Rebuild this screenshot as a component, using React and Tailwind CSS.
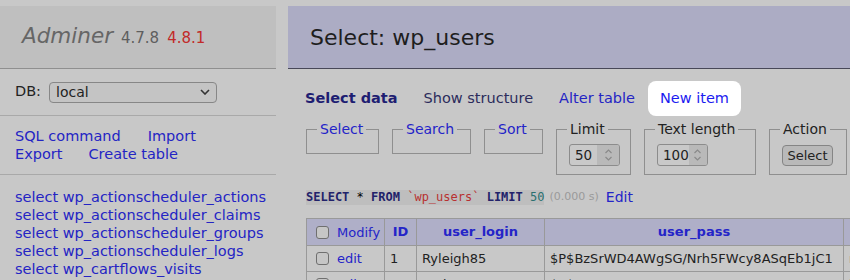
import React from 'react';

const sans = "font-['DejaVu_Sans',Verdana,sans-serif]";

const tables = [
  'wp_actionscheduler_actions',
  'wp_actionscheduler_claims',
  'wp_actionscheduler_groups',
  'wp_actionscheduler_logs',
  'wp_cartflows_visits',
];

function Box() {
  return <span className="inline-block w-[13px] h-[13px] border border-[#6f6f6f] rounded-[3px] bg-[#c6c6c6] align-middle" />;
}

function Spin({ value }) {
  return (
    <div className="flex w-[51px] h-[22px] border border-[#8c8c8c] rounded-[3px] bg-[#c9c9c9] overflow-hidden">
      <span className="flex-1 pl-[5px] text-[13.5px] leading-[20px] text-[#222]">{value}</span>
      <span className="w-[22px] bg-[#b9b9b9] flex flex-col items-center justify-center">
        <svg width="9" height="14" viewBox="0 0 9 14" fill="none" stroke="#8a8a8a" strokeWidth="1.2">
          <path d="M1.5 5 L4.5 2 L7.5 5" />
          <path d="M1.5 9 L4.5 12 L7.5 9" />
        </svg>
      </span>
    </div>
  );
}

function Field({ legend, blue, children, w }) {
  return (
    <fieldset className={`border border-[#8f8f8f] px-[10px] ${w}`}>
      <legend className={`px-[3px] text-[14px] leading-[18px] ${blue ? 'text-[#2424c8]' : 'text-[#222]'}`}>{legend}</legend>
      {children}
    </fieldset>
  );
}

export default function App() {
  return (
    <div className={`${sans} w-[850px] h-[280px] overflow-hidden bg-[#c8c8c8] pt-[6px] flex`}>
      {/* sidebar */}
      <div className="w-[276px] shrink-0">
        <div className="h-[63px] bg-[#bfbfbf] border-b border-[#8f8f8f] flex items-center pl-[22px] pb-[1px] gap-[8px]">
          <span className="italic text-[21.5px] text-[#666]">Adminer</span>
          <span className="text-[15px] text-[#5e5e5e] mt-[4px]">4.7.8</span>
          <span className="text-[15px] text-[#c22a2a] mt-[4px]">4.8.1</span>
        </div>
        <div className="h-[47px] border-b border-[#a9a9a9] flex items-center pl-[15px] gap-[8px]">
          <span className="text-[14.5px] text-[#222]">DB:</span>
          <div className="w-[168px] h-[21px] border border-[#878787] rounded-[4px] bg-[#c4c4c4] flex items-center justify-between px-[6px]">
            <span className="text-[14px] text-[#222]">local</span>
            <svg width="10" height="6" viewBox="0 0 10 6" fill="none" stroke="#333" strokeWidth="1.6">
              <path d="M1 1 L5 5 L9 1" />
            </svg>
          </div>
        </div>
        <div className="pt-[11px] pb-[11px] border-b border-[#a9a9a9] pl-[15px] text-[14.5px] leading-[18px] text-[#2424c4]">
          <div className="flex gap-[27px]"><span>SQL command</span><span>Import</span></div>
          <div className="flex gap-[26px]"><span>Export</span><span>Create table</span></div>
        </div>
        <div className="pt-[13px] pl-[15px] text-[14.5px] leading-[18px] text-[#2424c4]">
          {tables.map((t) => (
            <div key={t} className="whitespace-nowrap">select {t}</div>
          ))}
        </div>
      </div>

      {/* main */}
      <div className="ml-[12px] flex-1 min-w-0">
        <div className="h-[63px] bg-[#acacc4] border-b border-[#484858] flex items-center pl-[22px]">
          <span className="text-[22px] text-[#1e1e1e]">Select: wp_users</span>
        </div>
        <div className="pl-[17px] mt-[12px] flex items-center text-[14.5px] h-[35px]">
          <span className="font-bold text-[#1e1e72]">Select data</span>
          <span className="ml-[26px] text-[#2c2c5c]">Show structure</span>
          <span className="ml-[26px] text-[#2424c4]">Alter table</span>
          <span className="ml-[13px] h-[35px] px-[12px] flex items-center bg-white rounded-[8px] text-[#1b1bf0]">New item</span>
        </div>

        <div className="pl-[18px] mt-[4px] flex items-start gap-[13px]">
          <Field legend="Select" blue w="w-[73px]"><div className="h-[15px]" /></Field>
          <Field legend="Search" blue w="w-[79px]"><div className="h-[15px]" /></Field>
          <Field legend="Sort" blue w="w-[59px]"><div className="h-[15px]" /></Field>
          <Field legend="Limit" w="w-[75px]">
            <div className="pt-[6px] pb-[8px] pl-[2px]"><Spin value="50" /></div>
          </Field>
          <Field legend="Text length" w="w-[112px]">
            <div className="pt-[6px] pb-[8px] pl-[2px]"><Spin value="100" /></div>
          </Field>
          <Field legend="Action" w="w-[78px] shrink-0">
            <div className="pt-[7px] pb-[8px] pl-[2px]">
              <div className="w-[51px] h-[21px] border border-[#858585] rounded-[4px] bg-[#b9b9b9] flex items-center justify-center text-[13px] text-[#222]">Select</div>
            </div>
          </Field>
        </div>

        <div className="pl-[18px] mt-[14px] flex items-center h-[16px] whitespace-nowrap">
          <code className="font-['DejaVu_Sans_Mono',monospace] text-[12px] bg-[#bebebe] leading-[15px]">
            <b className="text-[#22226a]">SELECT</b> * <b className="text-[#22226a]">FROM</b>{' '}
            <span className="text-[#b83030]">`wp_users`</span> <b className="text-[#22226a]">LIMIT</b>{' '}
            <span className="text-[#2a7070]">50</span>
          </code>
          <span className="ml-[5px] text-[11px] text-[#9a9a9a]">(0.000 s)</span>
          <span className="ml-[7px] text-[14px] text-[#2424c8]">Edit</span>
        </div>

        <table className="ml-[18px] mt-[13px] table-fixed border-collapse w-[700px] text-[13px] text-[#222]">
          <colgroup>
            <col className="w-[78px]" />
            <col className="w-[32px]" />
            <col className="w-[128px]" />
            <col className="w-[299px]" />
            <col />
          </colgroup>
          <thead>
            <tr className="bg-[#afafc8] h-[27px]">
              <th className="border border-[#999] pl-[9px] text-left font-normal text-[#2424c8] whitespace-nowrap">
                <Box /><span className="ml-[8px] align-middle">Modify</span>
              </th>
              <th className="border border-[#999] font-bold text-[#2424c8]">ID</th>
              <th className="border border-[#999] font-bold text-[#2424c8]">user_login</th>
              <th className="border border-[#999] font-bold text-[#2424c8]">user_pass</th>
              <th className="border border-[#999] font-bold text-[#2424c8]">user_nicename</th>
            </tr>
          </thead>
          <tbody>
            <tr className="h-[26px]">
              <td className="border border-[#999] pl-[9px] whitespace-nowrap">
                <Box /><span className="ml-[8px] align-middle text-[#2424c8]">edit</span>
              </td>
              <td className="border border-[#999] pl-[5px]">1</td>
              <td className="border border-[#999] pl-[5px]">Ryleigh85</td>
              <td className="border border-[#999] pl-[5px] whitespace-nowrap">$P$BzSrWD4AWgSG/Nrh5FWcy8ASqEb1jC1</td>
              <td className="border border-[#999] pl-[5px] whitespace-nowrap">ryleigh85</td>
            </tr>
            <tr className="h-[26px]">
              <td className="border border-[#999] pl-[9px] whitespace-nowrap">
                <Box /><span className="ml-[8px] align-middle text-[#2424c8]">edit</span>
              </td>
              <td className="border border-[#999] pl-[5px]">2</td>
              <td className="border border-[#999] pl-[5px]">Kaden</td>
              <td className="border border-[#999] pl-[5px] whitespace-nowrap">$P$B</td>
              <td className="border border-[#999] pl-[5px]">k</td>
            </tr>
          </tbody>
        </table>
      </div>
    </div>
  );
}
